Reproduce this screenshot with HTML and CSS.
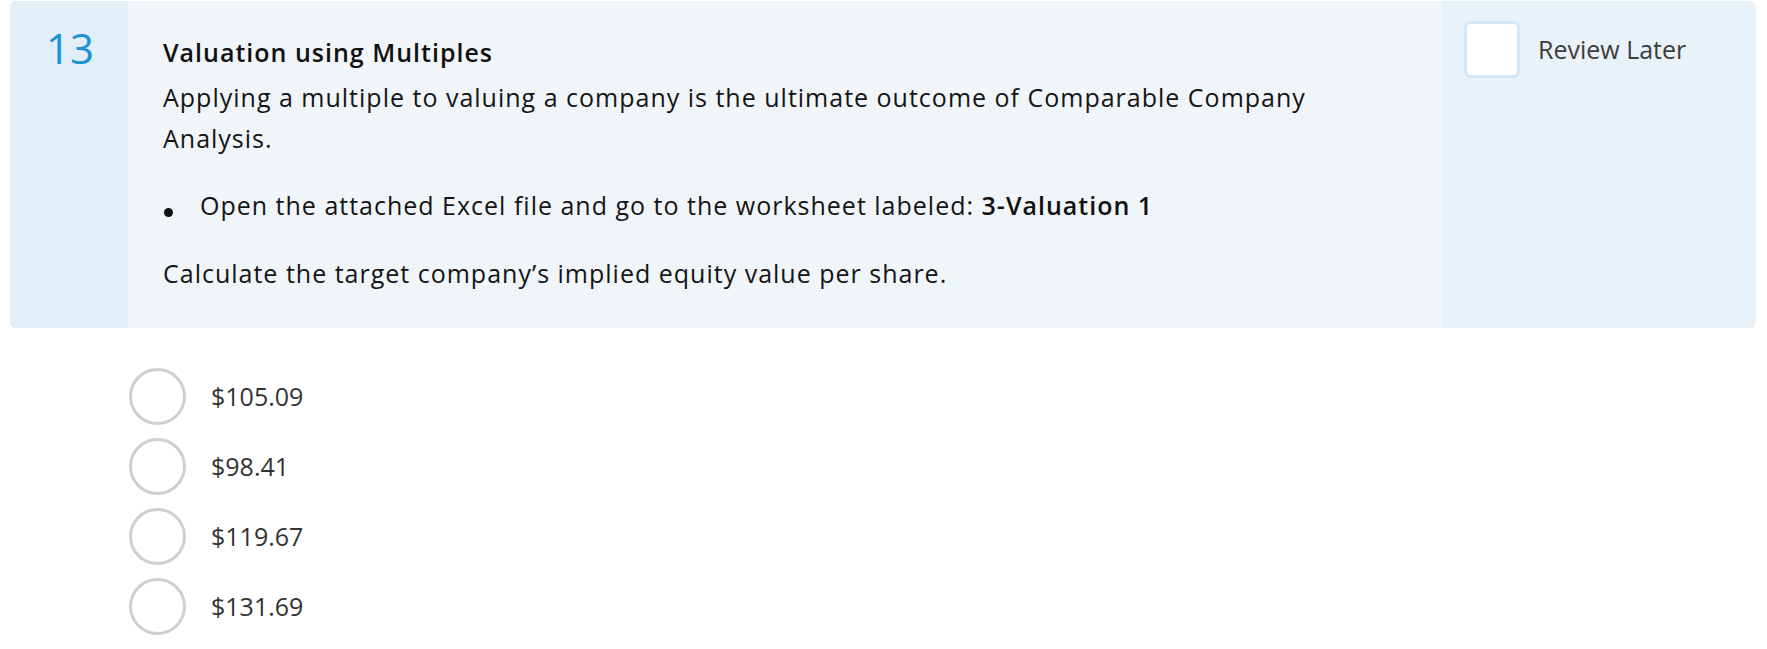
FILE: index.html
```html
<!DOCTYPE html>
<html lang="en">
<head>
<meta charset="utf-8">
<title>Question 13</title>
<link rel="stylesheet" href="styles.css">
</head>
<body>
<div class="card">
  <div class="qnum">13</div>
  <div class="qbody">
    <h2 class="qtitle">Valuation using Multiples</h2>
    <p class="qtext">Applying a multiple to valuing a company is the ultimate outcome of Comparable Company Analysis.</p>
    <ul class="qlist">
      <li>Open the attached Excel file and go to the worksheet labeled: <strong>3-Valuation 1</strong></li>
    </ul>
    <p class="qtext qlast">Calculate the target company’s implied equity value per share.</p>
  </div>
  <div class="qside">
    <label class="review">
      <span class="box"></span>
      <span class="review-label">Review Later</span>
    </label>
  </div>
</div>
<div class="options">
  <div class="option"><span class="radio"></span><span class="opt-text">$105.09</span></div>
  <div class="option"><span class="radio"></span><span class="opt-text">$98.41</span></div>
  <div class="option"><span class="radio"></span><span class="opt-text">$119.67</span></div>
  <div class="option"><span class="radio"></span><span class="opt-text">$131.69</span></div>
</div>
</body>
</html>
```

FILE: styles.css
```css
* { box-sizing: border-box; }
html, body { background: #ffffff; }
body {
  margin: 0;
  font-family: "Open Sans", "Noto Sans", sans-serif;
  font-size: 25px;
  line-height: 41px;
  color: #141414;
}
.card {
  display: grid;
  grid-template-columns: 118px 1fr 314px;
  margin: 1px 11px 0 10px;
  border-radius: 6px;
  overflow: hidden;
  background: #f0f5fa;
}
.qnum {
  background: #e2eef8;
  color: #1b93d3;
  font-size: 42px;
  line-height: 50px;
  text-align: center;
  padding-top: 22px;
  padding-left: 2px;
}
.qbody {
  padding: 31px 40px 34px 35px;
  letter-spacing: 1px;
}
.qtitle {
  margin: 0 0 4px;
  font-size: 25px;
  line-height: 41px;
  font-weight: 600;
  color: #111;
}
.qtext {
  margin: 0;
  max-width: 1180px;
}
.qlist {
  list-style: none;
  margin: 26px 0 27px;
  padding: 0;
}
.qlist li::before {
  content: "";
  display: inline-block;
  width: 9px;
  height: 9px;
  border-radius: 50%;
  background: #111;
  margin: 0 27px 0 1px;
  vertical-align: -2px;
}
.qlist strong { font-weight: 600; color: #111; }
.qside {
  background: #e9f1f9;
  padding: 20px 20px 0 22px;
}
.review {
  display: flex;
  align-items: center;
  gap: 18px;
}
.box {
  width: 56px;
  height: 57px;
  background: #ffffff;
  border: 3px solid #d5e7f5;
  border-radius: 7px;
}
.review-label {
  color: #3d3d3d;
  line-height: 41px;
}
.options {
  display: flex;
  flex-direction: column;
  gap: 13px;
  margin-top: 40px;
  padding-left: 129px;
}
.option {
  display: flex;
  align-items: center;
  gap: 25px;
}
.radio {
  width: 57px;
  height: 57px;
  border: 3px solid #cfcfcf;
  border-radius: 50%;
  background: #fff;
  flex: none;
}
.opt-text {
  color: #333;
}
```
